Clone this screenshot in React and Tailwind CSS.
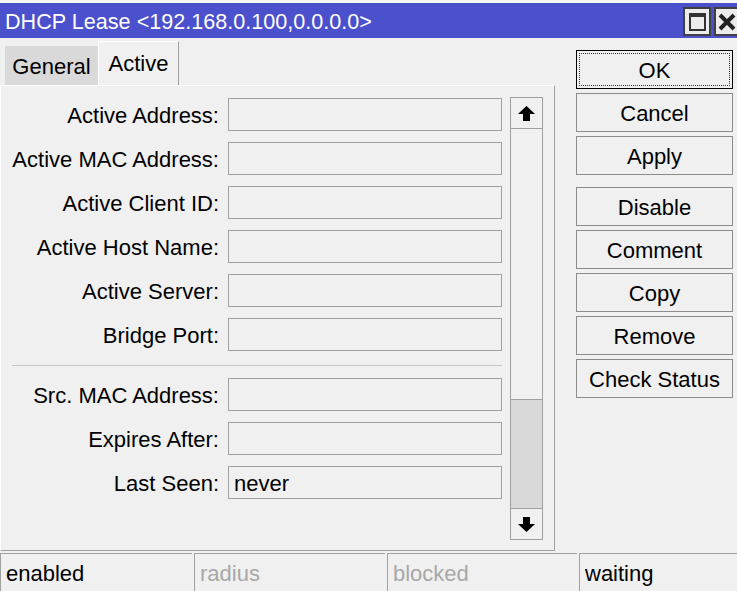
import React from "react";

const fields = [
  { label: "Active Address:", value: "" },
  { label: "Active MAC Address:", value: "" },
  { label: "Active Client ID:", value: "" },
  { label: "Active Host Name:", value: "" },
  { label: "Active Server:", value: "" },
  { label: "Bridge Port:", value: "" },
];

const fields2 = [
  { label: "Src. MAC Address:", value: "" },
  { label: "Expires After:", value: "" },
  { label: "Last Seen:", value: "never" },
];

const buttons = ["Cancel", "Apply"];
const buttons2 = ["Disable", "Comment", "Copy", "Remove", "Check Status"];

const Row = ({ label, value }) => (
  <div className="flex items-center h-[33px]">
    <div className="w-[218px] text-right whitespace-nowrap pt-[2px]">{label}</div>
    <div className="ml-[9px] w-[274px] h-[33px] border border-[#a0a0a0] flex items-center pl-[5px] pt-[2px]">
      {value}
    </div>
  </div>
);

const Arrow = ({ down }) => (
  <svg width="17" height="15" viewBox="0 0 17 15" className={down ? "rotate-180" : ""}>
    <polygon points="8.5,0 17,8 12,8 12,15 5,15 5,8 0,8" fill="#000" />
  </svg>
);

export default function App() {
  return (
    <div
      className="w-[737px] h-[591px] bg-[#f0f0f0] flex flex-col overflow-hidden text-[22px] text-black leading-none"
      style={{ fontFamily: '"Liberation Sans", Arial, sans-serif' }}
    >
      {/* title bar */}
      <div className="h-[38px] pt-[3px] bg-[#f7f7f7]">
        <div className="h-[35px] bg-[#4b50cc] flex items-center">
          <span className="pl-[5px] text-white text-[21.6px] pt-[2px]">DHCP Lease &lt;192.168.0.100,0.0.0.0&gt;</span>
          <div className="ml-auto flex gap-[3px] mr-[-3px] self-start mt-[4px]">
            <div className="w-[28px] h-[29px] bg-[#ececec] border-2 border-[#404040] flex items-center justify-center">
              <div className="w-[17px] h-[18px] border-2 border-t-[4px] border-[#333]" />
            </div>
            <div className="w-[26px] h-[29px] bg-[#ececec] border-2 border-[#404040] flex items-center justify-center">
              <svg width="18" height="18" viewBox="0 0 18 18">
                <path d="M2 2 L16 16 M16 2 L2 16" stroke="#222" strokeWidth="4" />
              </svg>
            </div>
          </div>
        </div>
      </div>

      <div className="flex h-[514px]">
        {/* left column */}
        <div className="w-[555px] flex flex-col">
          <div className="h-[47px] flex items-end pl-[5px]">
            <div className="w-[93px] h-[39px] bg-[#d9d9d9] flex items-center justify-center pt-[2px]">General</div>
            <div className="w-[81px] h-[44px] border-t border-l border-white border-r border-r-[#a0a0a0] flex items-center justify-center">
              Active
            </div>
          </div>
          <div className="h-[466px] border-t border-l border-white border-r border-r-[#a0a0a0] border-b border-b-[#a0a0a0] flex">
            <div className="w-[509px] pt-[12px] flex flex-col">
              <div className="flex flex-col gap-[11px]">
                {fields.map((f) => (
                  <Row key={f.label} {...f} />
                ))}
              </div>
              <div className="mt-[14px] ml-[11px] w-[490px] h-px bg-[#c8c8c8]" />
              <div className="mt-[12px] flex flex-col gap-[11px]">
                {fields2.map((f) => (
                  <Row key={f.label} {...f} />
                ))}
              </div>
            </div>
            <div className="mt-[11px] w-[33px] h-[443px] border border-[#a0a0a0] flex flex-col">
              <div className="h-[31px] border-b border-[#a0a0a0] flex items-center justify-center">
                <Arrow />
              </div>
              <div className="h-[271px] border-b border-[#a0a0a0]" />
              <div className="flex-1 bg-[#d9d9d9]" />
              <div className="h-[31px] border-t border-[#a0a0a0] flex items-center justify-center">
                <Arrow down />
              </div>
            </div>
          </div>
        </div>

        {/* right column */}
        <div className="ml-[21px] pt-[12px] w-[157px] flex flex-col gap-[4px]">
          <div className="h-[39px] border border-black p-[2px]">
            <div className="h-full border border-dotted border-[#333] flex items-center justify-center pt-[2px]">OK</div>
          </div>
          {buttons.map((b) => (
            <div key={b} className="h-[39px] border border-[#8c8c8c] flex items-center justify-center pt-[2px]">
              {b}
            </div>
          ))}
          <div className="mt-[8px] flex flex-col gap-[4px]">
            {buttons2.map((b) => (
              <div key={b} className="h-[39px] border border-[#8c8c8c] flex items-center justify-center whitespace-nowrap pt-[2px]">
                {b}
              </div>
            ))}
          </div>
        </div>
      </div>

      {/* status bar */}
      <div className="flex-1 flex gap-[2px] pt-px">
        <div className="w-[192px] border-t border-l border-[#a0a0a0] flex items-center pl-[5px] pt-[2px]">enabled</div>
        <div className="w-[191px] border-t border-l border-[#a0a0a0] flex items-center pl-[5px] pt-[2px] text-[#a8a8a8]">radius</div>
        <div className="w-[190px] border-t border-l border-[#a0a0a0] flex items-center pl-[5px] pt-[2px] text-[#a8a8a8]">blocked</div>
        <div className="flex-1 border-t border-l border-[#a0a0a0] flex items-center pl-[5px] pt-[2px]">waiting</div>
      </div>
    </div>
  );
}
